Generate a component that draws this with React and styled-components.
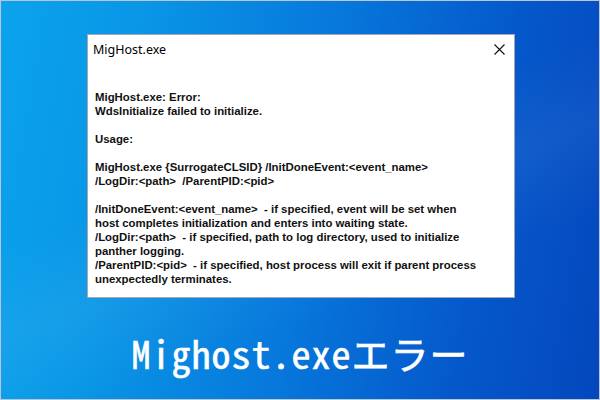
import React from "react";
import styled, { createGlobalStyle } from "styled-components";

const Global = createGlobalStyle`
  html, body { margin: 0; padding: 0; }
  body { width: 600px; height: 400px; overflow: hidden; }
`;

const Stage = styled.div`
  box-sizing: border-box;
  width: 600px;
  height: 400px;
  border: 1px solid #b9c6dc;
  background:
    linear-gradient(160deg, rgba(255,255,255,0) 40%, rgba(255,255,255,0.05) 55%, rgba(255,255,255,0) 70%),
    linear-gradient(100deg, #0ba3ed 0%, #0996e6 22%, #0779dc 50%, #0558cb 78%, #0447bd 100%);
  display: flex;
  flex-direction: column;
  align-items: flex-start;
  padding: 33px 0 0 86px;
`;

const Window = styled.div`
  box-sizing: border-box;
  width: 428px;
  height: 264px;
  background: #ffffff;
  border: 1px solid #a7a7ad;
  display: flex;
  flex-direction: column;
`;

const TitleBar = styled.div`
  height: 28px;
  display: flex;
  align-items: center;
  justify-content: space-between;
  padding-left: 5px;
`;

const Title = styled.span`
  font-family: "Noto Sans", "Open Sans", sans-serif;
  font-size: 12.5px;
  color: #000;
`;

const CloseButton = styled.div`
  width: 30px;
  height: 28px;
  display: flex;
  align-items: center;
  justify-content: center;
`;

const Body = styled.div`
  padding: 27px 0 0 7px;
  font-family: "Liberation Sans", Arial, sans-serif;
  font-size: 11.4px;
  font-weight: 700;
  line-height: 14px;
  color: #111;
`;

const Line = styled.div`
  height: 14px;
  white-space: pre;
`;

const Caption = styled.div`
  align-self: stretch;
  margin: 33px 0 0 -86px;
  text-align: center;
  font-family: "Noto Sans Mono CJK JP", "Noto Sans CJK JP", "DejaVu Sans Mono", monospace;
  font-size: 38px;
  line-height: 44px;
  letter-spacing: 1px;
  color: #ffffff;
  -webkit-text-stroke: 0.6px #ffffff;
`;

const lines = [
  "MigHost.exe: Error:",
  "WdsInitialize failed to initialize.",
  "",
  "Usage:",
  "",
  "MigHost.exe {SurrogateCLSID} /InitDoneEvent:<event_name>",
  "/LogDir:<path>  /ParentPID:<pid>",
  "",
  "/InitDoneEvent:<event_name>  - if specified, event will be set when",
  "host completes initialization and enters into waiting state.",
  "/LogDir:<path>  - if specified, path to log directory, used to initialize",
  "panther logging.",
  "/ParentPID:<pid>  - if specified, host process will exit if parent process",
  "unexpectedly terminates.",
];

export default function App() {
  return (
    <>
      <Global />
      <Stage>
        <Window>
          <TitleBar>
            <Title>MigHost.exe</Title>
            <CloseButton>
              <svg width="11" height="11" viewBox="0 0 11 11">
                <path d="M0.5 0.5 L10.5 10.5 M10.5 0.5 L0.5 10.5" stroke="#111" strokeWidth="1.1" fill="none" />
              </svg>
            </CloseButton>
          </TitleBar>
          <Body>
            {lines.map((l, i) => (
              <Line key={i}>{l}</Line>
            ))}
          </Body>
        </Window>
        <Caption>Mighost.exeエラー</Caption>
      </Stage>
    </>
  );
}
